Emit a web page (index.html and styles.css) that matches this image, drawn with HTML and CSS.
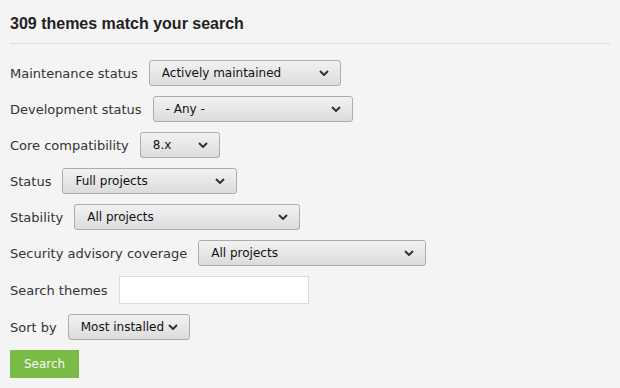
FILE: index.html
```html
<!DOCTYPE html>
<html lang="en">
<head>
    <meta charset="UTF-8">
    <meta name="viewport" content="width=device-width, initial-scale=1.0">
    <title>Search themes</title>
    <link rel="stylesheet" href="styles.css">
</head>
<body>

    <div class="page">
        <h2 class="title">309 themes match your search</h2>
        <hr class="divider">

        <form class="filters">
            <div class="field">
                <label for="maintenance">Maintenance status</label>
                <span class="select-wrap w-maint">
                    <select id="maintenance"><option>Actively maintained</option></select>
                    <svg class="chevron" viewBox="0 0 10 6"><path d="M1 1 L5 5 L9 1"/></svg>
                </span>
            </div>
            <div class="field">
                <label for="development">Development status</label>
                <span class="select-wrap w-dev">
                    <select id="development"><option>- Any -</option></select>
                    <svg class="chevron" viewBox="0 0 10 6"><path d="M1 1 L5 5 L9 1"/></svg>
                </span>
            </div>
            <div class="field">
                <label for="core">Core compatibility</label>
                <span class="select-wrap w-core">
                    <select id="core"><option>8.x</option></select>
                    <svg class="chevron" viewBox="0 0 10 6"><path d="M1 1 L5 5 L9 1"/></svg>
                </span>
            </div>
            <div class="field">
                <label for="status">Status</label>
                <span class="select-wrap w-status">
                    <select id="status"><option>Full projects</option></select>
                    <svg class="chevron" viewBox="0 0 10 6"><path d="M1 1 L5 5 L9 1"/></svg>
                </span>
            </div>
            <div class="field">
                <label for="stability">Stability</label>
                <span class="select-wrap w-stab">
                    <select id="stability"><option>All projects</option></select>
                    <svg class="chevron" viewBox="0 0 10 6"><path d="M1 1 L5 5 L9 1"/></svg>
                </span>
            </div>
            <div class="field">
                <label for="security">Security advisory coverage</label>
                <span class="select-wrap w-sec">
                    <select id="security"><option>All projects</option></select>
                    <svg class="chevron" viewBox="0 0 10 6"><path d="M1 1 L5 5 L9 1"/></svg>
                </span>
            </div>
            <div class="field">
                <label for="text">Search themes</label>
                <input id="text" class="text-input" type="text">
            </div>
            <div class="field">
                <label for="sort">Sort by</label>
                <span class="select-wrap w-sort">
                    <select id="sort"><option>Most installed</option></select>
                    <svg class="chevron" viewBox="0 0 10 6"><path d="M1 1 L5 5 L9 1"/></svg>
                </span>
            </div>
            <button type="submit" class="search-btn">Search</button>
        </form>
    </div>

</body>
</html>
```

FILE: styles.css
```css
body {
    margin: 0;
    background-color: #f4f4f4;
    font-family: "DejaVu Sans", Verdana, sans-serif;
    color: #333;
}
.page {
    padding: 14px 10px 10px;
}
.title {
    margin: 0;
    font-family: "Liberation Sans", Arial, sans-serif;
    font-size: 16px;
    font-weight: bold;
    line-height: 19px;
    color: #222;
}
.divider {
    margin: 10px 0 16px;
    border: 0;
    border-top: 1px solid #dcdcdc;
    height: 0;
}
.field {
    display: flex;
    align-items: center;
    gap: 11px;
    margin-bottom: 10px;
    font-size: 13px;
}
.select-wrap {
    position: relative;
    display: inline-block;
}
.select-wrap select {
    appearance: none;
    -webkit-appearance: none;
    width: 100%;
    height: 26px;
    margin: 0;
    padding: 0 22px 0 12px;
    border: 1px solid #adadad;
    border-radius: 3px;
    background: linear-gradient(#f2f2f2, #dcdcdc);
    font-family: "DejaVu Sans", Verdana, sans-serif;
    font-size: 12px;
    color: #111;
}
.chevron {
    position: absolute;
    right: 12px;
    top: 10px;
    width: 10px;
    height: 6px;
    fill: none;
    stroke: #333;
    stroke-width: 2;
    pointer-events: none;
}
.w-maint { width: 192px; }
.w-dev { width: 200px; }
.w-core { width: 80px; }
.w-status { width: 175px; }
.w-stab { width: 226px; }
.w-sec { width: 228px; }
.w-sort { width: 122px; }
.text-input {
    width: 190px;
    height: 28px;
    box-sizing: border-box;
    margin: 0;
    border: 1px solid #dcdcdc;
    background: #fff;
}
.search-btn {
    height: 28px;
    padding: 0 14px;
    border: 0;
    background: #7abb45;
    color: #f6f6f6;
    font-family: "DejaVu Sans", Verdana, sans-serif;
    font-size: 12px;
}
```
